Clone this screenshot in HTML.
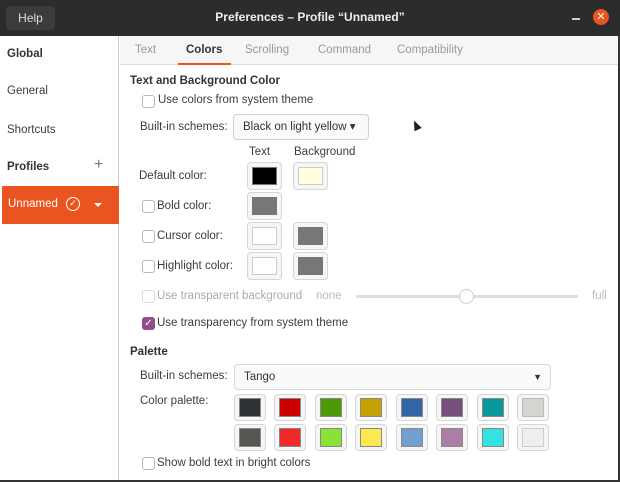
<!DOCTYPE html><html><head><style>
*{box-sizing:border-box;margin:0;padding:0}
body{width:620px;height:482px;overflow:hidden;font-family:"Liberation Sans",sans-serif;font-size:11.5px;line-height:25px;color:#3c3c3c;background:#fff;position:relative}
.a{position:absolute;white-space:nowrap}
.cb{position:absolute;width:13px;height:13px;border:1px solid #b8b8b8;border-radius:3px;background:#fff}
.sw{position:absolute;width:35px;height:28px;border:1px solid #d6d6d6;border-radius:4px;background:#f6f6f6;padding:4px}
.sw div{width:100%;height:100%;border:1px solid #777}
.pw{position:absolute;width:32px;height:27px;border:1px solid #d6d6d6;border-radius:4px;background:#f6f6f6;padding:3px 4px}
.pw div{width:100%;height:100%;border:1px solid #888}
</style></head><body>
<div class="a" style="left:0;top:0;width:620px;height:36px;background:#2c2c2c"></div>
<div class="a" style="left:6px;top:6px;width:49px;height:24px;background:#3c3c3c;border-radius:4px;color:#ddd;text-align:center;line-height:24px;font-size:12px">Help</div>
<div class="a" style="left:0;top:5px;width:620px;text-align:center;color:#eee;font-weight:bold;font-size:12px">Preferences – Profile “Unnamed”</div>
<div class="a" style="left:572px;top:18px;width:8px;height:2px;background:#ccc"></div>
<div class="a" style="left:593px;top:9px;width:16px;height:16px;border-radius:50%;background:#e95420;color:#fff;text-align:center;line-height:16px;font-size:11px">✕</div>
<div class="a" style="left:0;top:36px;width:119px;height:446px;background:#fff;border-right:1px solid #cfcfcf"></div>
<div class="a" style="left:7px;top:42px;font-weight:bold;color:#333">Global</div>
<div class="a" style="left:7px;top:79px">General</div>
<div class="a" style="left:7px;top:118px">Shortcuts</div>
<div class="a" style="left:7px;top:155px;font-weight:bold;color:#333">Profiles</div>
<div class="a" style="left:94px;top:156px;font-size:16px;line-height:17px;color:#777">+</div>
<div class="a" style="left:2px;top:186px;width:117px;height:38px;background:#e95420"></div>
<div class="a" style="left:8px;top:192px;color:#fff">Unnamed</div>
<div class="a" style="left:66px;top:197px;width:14px;height:14px;border:1.5px solid #fff;border-radius:50%;color:#fff;font-size:9px;text-align:center;line-height:11px">✓</div>
<div class="a" style="left:94px;top:203px;border:4px solid transparent;border-top:4px solid #fff"></div>
<div class="a" style="left:120px;top:36px;width:500px;height:29px;background:#f6f6f6;border-bottom:1px solid #ddd"></div>
<div class="a" style="left:135px;top:38px;color:#999">Text</div>
<div class="a" style="left:186px;top:38px;font-weight:bold;color:#333">Colors</div>
<div class="a" style="left:178px;top:63px;width:53px;height:2px;background:#e95420"></div>
<div class="a" style="left:245px;top:38px;color:#999">Scrolling</div>
<div class="a" style="left:318px;top:38px;color:#999">Command</div>
<div class="a" style="left:397px;top:38px;color:#999">Compatibility</div>
<div class="a" style="left:130px;top:69px;font-weight:bold;color:#333">Text and Background Color</div>
<div class="cb" style="left:142px;top:95px"></div><div class="a" style="left:158px;top:88px">Use colors from system theme</div>
<div class="a" style="left:140px;top:115px">Built-in schemes:</div>
<div class="a" style="left:233px;top:114px;width:136px;height:26px;border:1px solid #d0d0d0;border-radius:4px;background:#fafafa;padding:0 9px;color:#333">Black on light yellow ▾</div>
<div class="a" style="left:249px;top:140px">Text</div><div class="a" style="left:294px;top:140px">Background</div>
<div class="a" style="left:139px;top:164px">Default color:</div>
<div class="sw" style="left:247px;top:162px"><div style="background:#000"></div></div>
<div class="sw" style="left:293px;top:162px"><div style="background:#ffffdd;border-color:#ccc"></div></div>
<div class="cb" style="left:142px;top:200px"></div><div class="a" style="left:157px;top:194px">Bold color:</div>
<div class="sw" style="left:247px;top:192px"><div style="background:#777"></div></div>
<div class="cb" style="left:142px;top:230px"></div><div class="a" style="left:157px;top:224px">Cursor color:</div>
<div class="sw" style="left:247px;top:222px"><div style="background:#fff;border-color:#ccc"></div></div>
<div class="sw" style="left:293px;top:222px"><div style="background:#777"></div></div>
<div class="cb" style="left:142px;top:260px"></div><div class="a" style="left:157px;top:254px">Highlight color:</div>
<div class="sw" style="left:247px;top:252px"><div style="background:#fff;border-color:#ccc"></div></div>
<div class="sw" style="left:293px;top:252px"><div style="background:#777"></div></div>
<div class="cb" style="left:142px;top:290px;border-color:#ddd"></div><div class="a" style="left:157px;top:284px;color:#aaa">Use transparent background</div>
<div class="a" style="left:316px;top:284px;color:#bbb">none</div>
<div class="a" style="left:356px;top:295px;width:222px;height:3px;background:#ddd;border-radius:2px"></div>
<div class="a" style="left:459px;top:289px;width:15px;height:15px;border-radius:50%;background:#fff;border:1px solid #ccc"></div>
<div class="a" style="left:592px;top:284px;color:#bbb">full</div>
<div class="cb" style="left:142px;top:317px;background:#924d8b;border-color:#924d8b;color:#fff;font-size:10px;line-height:11px;text-align:center">✓</div><div class="a" style="left:157px;top:311px">Use transparency from system theme</div>
<div class="a" style="left:130px;top:340px;font-weight:bold;color:#333">Palette</div>
<div class="a" style="left:140px;top:364px">Built-in schemes:</div>
<div class="a" style="left:234px;top:364px;width:317px;height:26px;border:1px solid #d8d8d8;border-radius:4px;background:#fafafa;padding:0 9px;color:#333">Tango<span style="position:absolute;right:8px;font-size:9px">▼</span></div>
<div class="a" style="left:140px;top:389px">Color palette:</div>
<div class="pw" style="left:234px;top:394px"><div style="background:#2e3436"></div></div>
<div class="pw" style="left:274px;top:394px"><div style="background:#cc0000"></div></div>
<div class="pw" style="left:315px;top:394px"><div style="background:#4e9a06"></div></div>
<div class="pw" style="left:355px;top:394px"><div style="background:#c4a000"></div></div>
<div class="pw" style="left:396px;top:394px"><div style="background:#3465a4"></div></div>
<div class="pw" style="left:436px;top:394px"><div style="background:#75507b"></div></div>
<div class="pw" style="left:477px;top:394px"><div style="background:#06989a"></div></div>
<div class="pw" style="left:517px;top:394px"><div style="background:#d3d7cf;border-color:#bbb"></div></div>
<div class="pw" style="left:234px;top:424px"><div style="background:#555753"></div></div>
<div class="pw" style="left:274px;top:424px"><div style="background:#ef2929"></div></div>
<div class="pw" style="left:315px;top:424px"><div style="background:#8ae234"></div></div>
<div class="pw" style="left:355px;top:424px"><div style="background:#fce94f"></div></div>
<div class="pw" style="left:396px;top:424px"><div style="background:#729fcf"></div></div>
<div class="pw" style="left:436px;top:424px"><div style="background:#ad7fa8"></div></div>
<div class="pw" style="left:477px;top:424px"><div style="background:#34e2e2"></div></div>
<div class="pw" style="left:517px;top:424px"><div style="background:#eeeeec;border-color:#ccc"></div></div>
<div class="cb" style="left:142px;top:457px"></div><div class="a" style="left:157px;top:451px">Show bold text in bright colors</div>
<div class="a" style="left:412px;top:120px;border-left:4px solid transparent;border-right:4px solid transparent;border-bottom:10px solid #222;transform:rotate(-25deg)"></div>
<div class="a" style="left:618px;top:36px;width:2px;height:446px;background:#333"></div>
<div class="a" style="left:0;top:480px;width:620px;height:2px;background:#333"></div>
</body></html>
